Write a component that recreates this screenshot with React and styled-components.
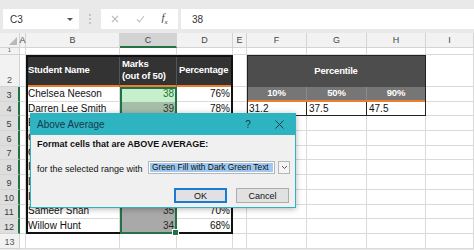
import React from "react";
import styled, { createGlobalStyle } from "styled-components";

const GlobalStyle = createGlobalStyle`
  html, body {
    margin: 0;
    padding: 0;
  }
  body {
    width: 474px;
    height: 250px;
    overflow: hidden;
    background: #e9e9e9;
    font-family: "Liberation Sans", Arial, sans-serif;
  }
`;

const Window = styled.div`
  position: relative;
  width: 474px;
  height: 250px;
  background: #e9e9e9;
  overflow: hidden;
`;

const FormulaBar = styled.div`
  display: flex;
  height: 20px;
  margin-top: 9px;
  padding-left: 3px;
`;

const NameBox = styled.div`
  width: 76px;
  background: #fff;
  display: flex;
  align-items: center;
  justify-content: space-between;
  padding: 0 6px 0 7px;
  box-sizing: border-box;
  font-size: 10px;
  color: #333;
`;

const Caret = styled.span`
  width: 0;
  height: 0;
  border-left: 3px solid transparent;
  border-right: 3px solid transparent;
  border-top: 3px solid #555;
`;

const Grip = styled.div`
  width: 22px;
  display: flex;
  flex-direction: column;
  align-items: center;
  justify-content: center;
  gap: 2px;
  span {
    width: 2px;
    height: 2px;
    background: #c4c4c4;
  }
`;

const FuncBox = styled.div`
  width: 77px;
  background: #fff;
  display: flex;
  align-items: center;
`;

const FuncIcon = styled.span`
  width: ${p => p.$w}px;
  display: flex;
  justify-content: center;
`;

const Fx = styled.span`
  font-family: "Liberation Serif", serif;
  font-style: italic;
  font-size: 11px;
  color: #444;
  sub {
    font-size: 7px;
  }
`;

const Input = styled.div`
  flex: 1;
  margin-left: 3px;
  background: #fff;
  display: flex;
  align-items: center;
  padding-left: 11px;
  font-size: 10px;
  color: #333;
`;

const Sheet = styled.div`
  display: grid;
  margin-top: 4px;
  grid-template-columns: 20px 6px 94px 57px 56px 14px 60px 60px 59px 1fr;
  grid-template-rows: 15px 7px 32px repeat(11, 14.7px);
  background: #fff;
`;

const ColHead = styled.div`
  grid-column: ${p => p.$col};
  grid-row: 1;
  background: ${p => (p.$sel ? "#d3d3d3" : "#f2f2f2")};
  border-right: 1px solid #d4d4d4;
  border-bottom: ${p => (p.$sel ? "2px solid #217346" : "1px solid #d4d4d4")};
  box-sizing: border-box;
  display: flex;
  align-items: center;
  justify-content: center;
  font-size: 9px;
  color: #444444;
`;

const Corner = styled.div`
  grid-column: 1;
  grid-row: 1;
  background: #f2f2f2;
  border-right: 1px solid #d4d4d4;
  border-bottom: 1px solid #d4d4d4;
  box-sizing: border-box;
  display: flex;
  align-items: flex-end;
  justify-content: flex-end;
  padding: 0 2px 2px 0;
  span {
    width: 0;
    height: 0;
    border-left: 8px solid transparent;
    border-bottom: 8px solid #b9b9b9;
  }
`;

const RowHead = styled.div`
  grid-column: 1;
  grid-row: ${p => p.$row};
  background: ${p => (p.$sel ? "#dedede" : "#f2f2f2")};
  border-bottom: 1px solid #d4d4d4;
  border-right: ${p => (p.$sel ? "2px solid #217346" : "1px solid #d4d4d4")};
  box-sizing: border-box;
  display: flex;
  align-items: flex-end;
  justify-content: center;
  padding-bottom: 1px;
  font-size: ${p => (p.$tiny ? 5 : 9)}px;
  color: ${p => (p.$sel ? "#3a3a3a" : "#555")};
`;

const Cell = styled.div`
  grid-column: ${p => p.$col} / span ${p => p.$span || 1};
  grid-row: ${p => p.$row};
  background: ${p => p.$bg || "#fff"};
  color: ${p => p.$color || "#111"};
  font-weight: ${p => (p.$bold ? 700 : 400)};
  font-size: ${p => (p.$bold ? 9.5 : 10)}px;
  letter-spacing: ${p => (p.$bold ? "-0.2px" : "0")};
  line-height: 12px;
  border-right: 1px solid ${p => p.$line || "#dadada"};
  border-bottom: ${p => p.$under || `1px solid ${p.$line || "#dadada"}`};
  box-sizing: border-box;
  display: flex;
  align-items: center;
  justify-content: ${p =>
    p.$align === "right" ? "flex-end" : p.$align === "center" ? "center" : "flex-start"};
  padding: 0 2px;
  white-space: pre;
  overflow: hidden;
`;

const Frame = styled.div`
  grid-column: ${p => p.$cols};
  grid-row: ${p => p.$rows};
  border: ${p => p.$border};
  pointer-events: none;
  z-index: ${p => p.$z || 1};
  position: relative;
`;

const Handle = styled.span`
  position: absolute;
  right: -4px;
  bottom: -4px;
  width: 5px;
  height: 5px;
  background: #217346;
  border: 1px solid #fff;
`;

const Dialog = styled.div`
  position: absolute;
  left: 30px;
  top: 113px;
  width: 264px;
  background: #f0f0f0;
  border: 1px solid #2fb2bd;
  box-shadow: 0 1px 6px rgba(0, 0, 0, 0.3);
  z-index: 5;
  display: flex;
  flex-direction: column;
`;

const TitleBar = styled.div`
  height: 21px;
  background: #2db4c0;
  display: flex;
  align-items: center;
  padding: 0 10px 0 6px;
  font-size: 10px;
  color: #16394e;
`;

const Controls = styled.div`
  margin-left: auto;
  display: flex;
  align-items: center;
  gap: 19px;
`;

const Ctrl = styled.span`
  width: 12px;
  display: flex;
  justify-content: center;
  font-size: 10px;
  color: #16394e;
`;

const Body = styled.div`
  display: flex;
  flex-direction: column;
  padding: 3px 5px 4px 6px;
`;

const Heading = styled.div`
  font-weight: 700;
  font-size: 9px;
  line-height: 12px;
  color: #111;
`;

const Row = styled.div`
  display: flex;
  align-items: center;
  gap: 3px;
  height: 13px;
  margin-top: ${p => p.$mt}px;
`;

const Label = styled.span`
  flex: 1;
  font-size: 9px;
  color: #111;
  padding-top: 3px;
`;

const Select = styled.div`
  width: 127px;
  height: 13px;
  box-sizing: border-box;
  border: 1px solid #b5b5b5;
  background: #fff;
  padding: 1px;
  display: flex;
  overflow: hidden;
  span {
    flex: 1;
    background: #9ec8ef;
    font-size: 8.4px;
    line-height: 9px;
    padding-left: 2px;
    color: #111;
    white-space: nowrap;
    overflow: hidden;
  }
`;

const Arrow = styled.div`
  width: 12px;
  height: 13px;
  box-sizing: border-box;
  border: 1px solid #b5b5b5;
  background: #f5f5f5;
  display: flex;
  align-items: center;
  justify-content: center;
`;

const Buttons = styled.div`
  display: flex;
  justify-content: flex-end;
  gap: 9px;
  margin-top: 14px;
  padding-right: 1px;
`;

const Button = styled.div`
  width: 53px;
  height: 15px;
  box-sizing: border-box;
  background: #e1e1e1;
  border: ${p => (p.$primary ? "2px solid #1d7ad4" : "1px solid #adadad")};
  display: flex;
  align-items: center;
  justify-content: center;
  font-size: 9px;
  color: #111;
`;

const COLS = ["A", "B", "C", "D", "E", "F", "G", "H", "I"];

// rows 5-10 sit under the dialog: only the first letter of the name peeks out
const students = [
  ["Chelsea Neeson", 38],
  ["Darren Lee Smith", 39],
  ["Ethan Brooks", null],
  ["Carla Mendes", null],
  ["Owen Price", null],
  ["Isla Turner", null],
  ["Liam Foster", null],
  ["Ian Grant", null],
  ["Sameer Shah", 35],
  ["Willow Hunt", 34],
];

const markStyle = {
  3: { bg: "#c6efce", color: "#1a7a2c" },
  4: { bg: "#a6bea9", color: "#2b3a2d" },
};

const HEAD = "#333333";

const buildCells = () => {
  const cells = [];
  for (let r = 1; r <= 13; r++) {
    const g = r + 1;
    const filled = {};
    if (r === 2) {
      const under = "2px solid #ed7d31";
      cells.push(
        <Cell key="b2" $col={3} $row={g} $bg={HEAD} $color="#fff" $bold $line="#555" $under={under}>Student Name</Cell>,
        <Cell key="c2" $col={4} $row={g} $bg={HEAD} $color="#fff" $bold $line="#555" $under={under}>{"Marks\n(out of 50)"}</Cell>,
        <Cell key="d2" $col={5} $row={g} $bg={HEAD} $color="#fff" $bold $line={HEAD} $under={under}>Percentage</Cell>,
        <Cell key="f2" $col={7} $span={3} $row={g} $bg="#4d4d4d" $color="#fff" $bold $line="#4d4d4d" $align="center">Percentile</Cell>
      );
      filled.B = filled.C = filled.D = filled.F = filled.G = filled.H = true;
    }
    if (r >= 3 && r <= 12) {
      const [name, mark] = students[r - 3];
      const ms = markStyle[r] || { bg: "#a9a9a9", color: "#2a2a2a" };
      cells.push(
        <Cell key={"b" + r} $col={3} $row={g}>{name}</Cell>,
        <Cell key={"c" + r} $col={4} $row={g} $bg={ms.bg} $color={ms.color} $align="right" $line={ms.bg}>{mark}</Cell>,
        <Cell key={"d" + r} $col={5} $row={g} $align="right">{mark ? mark * 2 + "%" : ""}</Cell>
      );
      filled.B = filled.C = filled.D = true;
    }
    if (r === 3) {
      ["10%", "50%", "90%"].forEach((t, i) =>
        cells.push(
          <Cell key={"p" + i} $col={7 + i} $row={g} $bg="#767676" $color="#fff" $bold $align="center" $line={i < 2 ? "#8c8c8c" : "#767676"} $under="2px solid #ed7d31">{t}</Cell>
        )
      );
      filled.F = filled.G = filled.H = true;
    }
    if (r === 4) {
      ["31.2", "37.5", "47.5"].forEach((t, i) =>
        cells.push(
          <Cell key={"v" + i} $col={7 + i} $row={g} $line="#222">{t}</Cell>
        )
      );
      filled.F = filled.G = filled.H = true;
    }
    COLS.forEach((c, i) => {
      if (!filled[c]) cells.push(<Cell key={c + r} $col={i + 2} $row={g} />);
    });
  }
  return cells;
};

const App = () => {
  return (
    <Window>
      <GlobalStyle />
      <FormulaBar>
        <NameBox>
          C3
          <Caret />
        </NameBox>
        <Grip>
          <span />
          <span />
          <span />
        </Grip>
        <FuncBox>
          <FuncIcon $w={28}>
            <svg width="8" height="8" viewBox="0 0 8 8">
              <path d="M1 1 L7 7 M7 1 L1 7" stroke="#bdbdbd" strokeWidth="1.1" />
            </svg>
          </FuncIcon>
          <FuncIcon $w={22}>
            <svg width="9" height="8" viewBox="0 0 9 8">
              <path d="M1 4.5 L3.5 7 L8 1" stroke="#bdbdbd" strokeWidth="1.1" fill="none" />
            </svg>
          </FuncIcon>
          <FuncIcon $w={27}>
            <Fx>
              f<sub>x</sub>
            </Fx>
          </FuncIcon>
        </FuncBox>
        <Input>38</Input>
      </FormulaBar>

      <Sheet>
        <Corner>
          <span />
        </Corner>
        {COLS.map((c, i) => (
          <ColHead key={c} $col={i + 2} $sel={c === "C"}>
            {c}
          </ColHead>
        ))}
        {Array.from({ length: 13 }, (_, i) => i + 1).map(r => (
          <RowHead key={r} $row={r + 1} $sel={r >= 3 && r <= 12} $tiny={r === 1}>
            {r}
          </RowHead>
        ))}
        {buildCells()}
        <Frame $cols="3 / 6" $rows="3 / 14" $border="2px solid #111" />
        <Frame $cols="7 / 10" $rows="3 / 6" $border="1px solid #222" />
        <Frame $cols="4 / 5" $rows="4 / 14" $border="2px solid #217346" $z={2}>
          <Handle />
        </Frame>
      </Sheet>

      <Dialog>
        <TitleBar>
          Above Average
          <Controls>
            <Ctrl>?</Ctrl>
            <Ctrl>
              <svg width="9" height="9" viewBox="0 0 9 9">
                <path d="M0.5 0.5 L8.5 8.5 M8.5 0.5 L0.5 8.5" stroke="#16394e" strokeWidth="1" />
              </svg>
            </Ctrl>
          </Controls>
        </TitleBar>
        <Body>
          <Heading>Format cells that are ABOVE AVERAGE:</Heading>
          <Row $mt={11}>
            <Label>for the selected range with</Label>
            <Select>
              <span>Green Fill with Dark Green Text</span>
            </Select>
            <Arrow>
              <svg width="7" height="5" viewBox="0 0 7 5">
                <path d="M1 1 L3.5 3.5 L6 1" stroke="#555" strokeWidth="1" fill="none" />
              </svg>
            </Arrow>
          </Row>
          <Buttons>
            <Button $primary>OK</Button>
            <Button>Cancel</Button>
          </Buttons>
        </Body>
      </Dialog>
    </Window>
  );
};

export default App;
